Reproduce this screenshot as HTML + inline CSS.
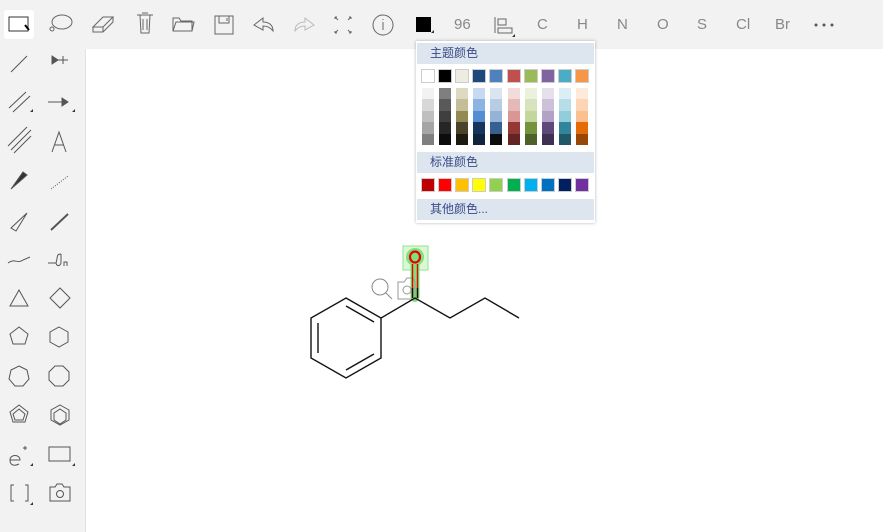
<!DOCTYPE html>
<html><head><meta charset="utf-8"><style>
body{margin:0;width:883px;height:532px;overflow:hidden;background:#fff;font-family:"Liberation Sans","Noto Sans CJK SC",sans-serif;position:relative}
.top{position:absolute;left:0;top:0;width:883px;height:49px;background:#f2f2f2}
.left{position:absolute;left:0;top:49px;width:85px;height:483px;background:#f2f2f2;border-right:1px solid #e2e2e2}
.t{position:absolute;top:16px;font-size:15px;color:#888}
.pop{position:absolute;left:416px;top:41px;width:179px;height:182px;background:#fff;box-shadow:0 0 3px rgba(0,0,0,.3)}
.hd{position:absolute;left:1px;width:177px;height:21px;background:#dde6ee;color:#3a4a8a;font-size:12px;line-height:21px;text-indent:13px}
.sw{position:absolute;width:12px;height:12px;border:1px solid #ccc}
</style></head><body>
<div class="top"></div>
<div class="left"></div>
<svg width="883" height="532" style="position:absolute;left:0;top:0" fill="none" stroke="#666" stroke-width="1">
<rect x="4" y="10" width="30" height="29" rx="3" fill="#fff" stroke="none"/>
<rect x="9" y="17" width="19" height="14" stroke="#333"/><path d="M25 25l4 5" stroke="#000" stroke-width="2"/>
<ellipse cx="62" cy="22" rx="10" ry="7"/><circle cx="52" cy="29" r="2"/>
<path d="M93 27l10-10h10l-10 10zm0 0v5h10l10-10v-5M103 27v5"/>
<path d="M137 15h16M140 15l1 18h8l1-18M143 19v11M147 19v11M142 13h6"/>
<path d="M173 18h6l2 3h11v10h-19zm0 13l3-9h18l-2 9"/>
<path d="M215 16h18v18h-18zM219 16v7h10v-7M227 18v3"/>
<path d="M254 25l9-7v4c6 0 10 3 10 9c-3-4-6-5-10-5v4z"/>
<path d="M314 25l-9-7v4c-6 0-10 3-10 9c3-4 6-5 10-5v4z" stroke="#bbb"/>
<path d="M335 17l3 3M335 17h2M335 17v2M351 17l-3 3M351 17h-2M351 17v2M335 33l3-3M335 33h2M335 33v-2M351 33l-3-3M351 33h-2M351 33v-2"/>
<circle cx="383" cy="25" r="10"/><path d="M383 22v8M383 19v1"/>
<rect x="416" y="17" width="15" height="15" fill="#000" stroke="none"/><path d="M431 33l3-3v3z" fill="#333" stroke="none"/>
<path d="M495 17v16M498 19h8v6h-8zM498 28h14v5h-14z" stroke="#666"/><path d="M512 37l3-3v3z" fill="#333" stroke="none"/>
<circle cx="816" cy="25" r="1.5" fill="#555" stroke="none"/><circle cx="824" cy="25" r="1.5" fill="#555" stroke="none"/><circle cx="832" cy="25" r="1.5" fill="#555" stroke="none"/>
<g stroke="#555">
<path d="M11 72L27 56"/><path d="M52 56l6 4-6 4zM58 60h10M63 56v8" fill="#555"/>
<path d="M9 108l17-16M13 112l17-16"/><path d="M48 102h14"/><path d="M62 98l6 4-6 4z" fill="#555"/>
<path d="M8 146l19-19M11 150l20-20M14 153l17-17"/><path d="M52 152l7-20 7 20M55 145h8"/>
<path d="M11 189l16-14-4-3z" fill="#333"/><path d="M51 189l17-13" stroke-dasharray="1 1.5"/>
<path d="M11 228l16-15-11 18z"/><path d="M51 230l17-16" stroke-width="2"/>
<path d="M8 263c6-5 10 1 15-3l7-3"/><path d="M48 263h8c2-6 0-9 5-9M56 263c1 4 5 3 5-1v-8M64 266v-4h3v4"/>
<path d="M10 306l9-16 9 16z"/><path d="M60 288l10 10-10 10-10-10z"/>
<path d="M19 327l9 7-3 10h-12l-3-10z"/><path d="M59 327l9 5v10l-9 5-9-5v-10z"/>
<path d="M19 366l8 4 2 9-6 7h-8l-6-7 2-9z"/><path d="M55 366h8l6 6v8l-6 6h-8l-6-6v-8z"/>
<path d="M19 405l9 7-3 10h-12l-3-10z"/><path d="M19 409l6 5-2 6h-8l-2-6z"/><path d="M60 405l9 5v10l-9 5-9-5v-10z"/><path d="M60 409l6 4v7l-6 4-6-4v-7z"/>
<path d="M10 460h10c0-6-10-6-10 0s5 6 9 4M23 448h4M25 446v4"/><rect x="49" y="447" width="21" height="14"/>
<path d="M14 485h-3v16h3M25 485h3v16h-3"/><path d="M50 487h5l2-3h5l2 3h6v14h-20z"/><circle cx="60" cy="494" r="3.5"/>
</g>
<g fill="#333" stroke="none"><path d="M30 112l3-3v3zM72 112l3-3v3zM30 466l3-3v3zM72 466l3-3v3zM30 505l3-3v3z"/></g>
<rect x="403" y="246" width="25" height="24" fill="#b8f0b0" fill-opacity=".5" stroke="#8de68a"/>
<circle cx="415" cy="257" r="9" fill="#7de27a" stroke="none"/>
<path d="M415 262v36" stroke="#7de27a" stroke-width="9"/>
<circle cx="415" cy="298" r="4" fill="#7de27a" stroke="none"/>
<circle cx="380" cy="287" r="8" stroke="#888"/><path d="M386 293l6 6" stroke="#888"/>
<path d="M398 282h6l3-4h6l2 4v17h-17z" stroke="#999"/><circle cx="407" cy="290" r="4" stroke="#999"/>
<g stroke="#111" stroke-width="1.4">
<path d="M346 298l35 20v40l-35 20-35-20v-40zM346 306l28 16M374 354l-28 16M318 353v-30"/>
<path d="M381 318l34-20 35 20 35-20 34 20"/>
</g>
<path d="M412.5 298v-34M417.5 298v-34" stroke="#e00" stroke-width="1.4"/>
<path d="M412.5 298v-10M417.5 298v-10" stroke="#111" stroke-width="1.4"/>
<ellipse cx="415" cy="257" rx="5" ry="5.5" stroke="#e00" stroke-width="2.2"/>
</svg>
<div class="t" style="left:454px">96</div>
<div class="t" style="left:537px">C</div>
<div class="t" style="left:577px">H</div>
<div class="t" style="left:617px">N</div>
<div class="t" style="left:657px">O</div>
<div class="t" style="left:697px">S</div>
<div class="t" style="left:736px">Cl</div>
<div class="t" style="left:775px">Br</div>
<div class="pop">
<div class="hd" style="top:2px">主题颜色</div>
<div class="hd" style="top:111px">标准颜色</div>
<div class="hd" style="top:158px">其他颜色...</div>
<div id="g"></div>
</div>
<script>
var top1=["#fff","#000","#eeece1","#1f497d","#4f81bd","#c0504d","#9bbb59","#8064a2","#4bacc6","#f79646"];
var sh=[["#f2f2f2","#d8d8d8","#bfbfbf","#a5a5a5","#7f7f7f"],["#7f7f7f","#595959","#3f3f3f","#262626","#0c0c0c"],["#ddd9c3","#c4bd97","#938953","#494429","#1d1b10"],["#c6d9f0","#8db3e2","#548dd4","#17365d","#0f243e"],["#dbe5f1","#b8cce4","#95b3d7","#366092","#0c0c0c"],["#f2dcdb","#e5b9b7","#d99694","#953734","#632423"],["#ebf1dd","#d7e3bc","#c3d69b","#76923c","#4f6128"],["#e5e0ec","#ccc1d9","#b2a2c7","#5f497a","#3f3151"],["#dbeef3","#b7dde8","#92cddc","#31859b","#205867"],["#fdeada","#fbd5b5","#fac08f","#e36c09","#974806"]];
var std=["#c00000","#f00","#ffc000","#ff0","#92d050","#00b050","#00b0f0","#0070c0","#002060","#7030a0"];
var h="";
for(var i=0;i<10;i++){var x=5+i*17.1;
h+='<div class="sw" style="left:'+x+'px;top:28px;background:'+top1[i]+'"></div>';
for(var j=0;j<5;j++)h+='<div style="position:absolute;left:'+(x+1)+'px;top:'+(47+j*11.4)+'px;width:12px;height:11.4px;background:'+sh[i][j]+'"></div>';
h+='<div class="sw" style="left:'+x+'px;top:137px;background:'+std[i]+'"></div>';}
document.getElementById("g").innerHTML=h;
</script>
</body></html>
